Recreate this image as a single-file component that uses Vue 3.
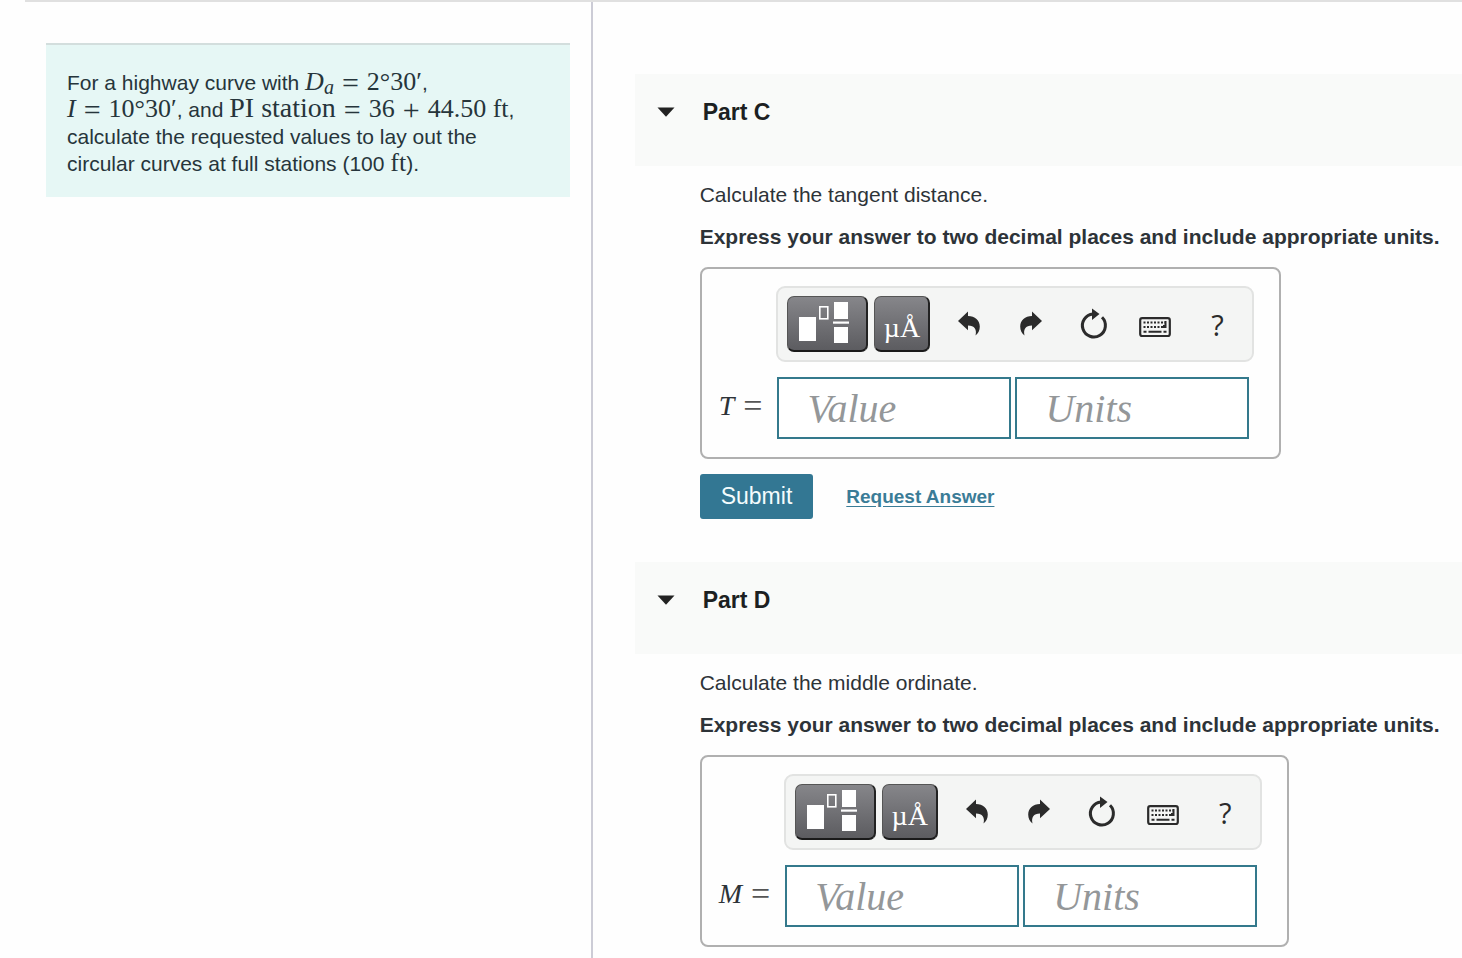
<template>
  <div class="page">
    <aside class="problem-pane">
      <p class="problem">
        For a highway curve with
        <span class="math"><i>D</i><sub>a</sub><span class="op">=</span>2°30′</span>,
        <br />
        <span class="math"><i>I</i><span class="op">=</span>10°30′</span>, and
        <span class="math"><span class="words">PI station</span><span class="op">=</span>36<span class="op">+</span>44.50 ft</span>,
        <br />
        calculate the requested values to lay out the circular curves at full stations (100 <span class="math">ft</span>).
      </p>
    </aside>

    <main class="parts">
      <section v-for="part in parts" :key="part.id" class="part">
        <header class="part__header">
          <button class="part__toggle" type="button" :aria-expanded="part.open" @click="part.open = !part.open">
            <svg class="part__caret" :class="{ 'part__caret--closed': !part.open }" width="18" height="10" viewBox="0 0 18 10">
              <path d="M0.5 0.5h17L9 9.8z" fill="#222" />
            </svg>
            {{ part.title }}
          </button>
        </header>

        <div v-if="part.open" class="part__body">
          <p class="question">{{ part.question }}</p>
          <p class="instruction">Express your answer to two decimal places and include appropriate units.</p>

          <form @submit.prevent>
            <div class="answer">
              <label class="answer__label" :for="`${part.id}-value`"><i>{{ part.symbol }}</i><span class="eq">=</span></label>
              <div class="answer__main">
                <div class="toolbar">
                  <button class="tool-key tool-key--wide" type="button" aria-label="Templates">
                    <svg width="80" height="56" viewBox="0 0 80 56" fill="#fff">
                      <rect x="12" y="21" width="17" height="24" />
                      <rect x="32.8" y="10.8" width="8" height="12" fill="none" stroke="#fff" stroke-width="1.6" />
                      <rect x="47" y="6" width="14" height="17" />
                      <rect x="46" y="25.5" width="16" height="2.2" />
                      <rect x="47" y="31" width="14" height="16" />
                    </svg>
                  </button>
                  <button class="tool-key tool-key--symbols" type="button" aria-label="Symbols">µÅ</button>
                  <div class="toolbar__icons">
                    <button class="tool" type="button" aria-label="Undo">
                      <svg width="24" height="26" viewBox="0 0 24 26">
                        <path d="M1 10L11 0.500v4.500C18 5 22.800 9.500 22.800 15.500c0 4-1.600 7-4.300 9C20 18.500 17.500 14.500 11 14.500v4.700z" fill="#2b2b2b" />
                      </svg>
                    </button>
                    <button class="tool" type="button" aria-label="Redo">
                      <svg width="24" height="26" viewBox="0 0 24 26">
                        <path d="M23 10L13 0.500v4.500C6 5 1.200 9.500 1.200 15.500c0 4 1.600 7 4.300 9C4 18.500 6.500 14.500 13 14.500v4.700z" fill="#2b2b2b" />
                      </svg>
                    </button>
                    <button class="tool" type="button" aria-label="Reset">
                      <svg width="30" height="32" viewBox="0 0 30 32">
                        <path d="M24 9.300A11.500 11.500 0 1 1 15 6" fill="none" stroke="#2b2b2b" stroke-width="3" />
                        <path d="M14 0.500l7.500 5.500-7.500 6z" fill="#2b2b2b" />
                      </svg>
                    </button>
                    <button class="tool" type="button" aria-label="Keyboard">
                      <svg width="32" height="30" viewBox="0 0 32 30">
                        <rect x="1.200" y="9.200" width="29.600" height="17.800" rx="2" fill="none" stroke="#2b2b2b" stroke-width="2.200" />
                        <path d="M4.500 13.500H27M4.500 18H24" stroke="#2b2b2b" stroke-width="2.200" stroke-dasharray="2 1.500" />
                        <path d="M4.500 22.800h3M9.500 22.800h13M24.500 22.800h3" stroke="#2b2b2b" stroke-width="2" />
                        <path d="M27.500 12v7h-3.500v-3h1.500V12z" fill="#2b2b2b" />
                      </svg>
                    </button>
                    <button class="tool tool--help" type="button" aria-label="Help">?</button>
                  </div>
                </div>
                <div class="fields">
                  <input :id="`${part.id}-value`" v-model="part.value" class="field" type="text" placeholder="Value" />
                  <input v-model="part.units" class="field" type="text" placeholder="Units" aria-label="Units" />
                </div>
              </div>
            </div>
            <div class="actions">
              <button class="submit" type="submit">Submit</button>
              <a class="request" href="#">Request Answer</a>
            </div>
          </form>
        </div>
      </section>
    </main>
  </div>
</template>

<script setup>
import { reactive } from 'vue'

const parts = reactive([
  { id: 'c', title: 'Part C', question: 'Calculate the tangent distance.', symbol: 'T', value: '', units: '', open: true },
  { id: 'd', title: 'Part D', question: 'Calculate the middle ordinate.', symbol: 'M', value: '', units: '', open: true },
])
</script>

<style>
body { margin: 0; background: #fefefe; overflow: hidden; }
</style>

<style scoped>
.page {
  display: grid; grid-template-columns: minmax(0, 15fr) minmax(0, 22fr);
  height: 100vh; overflow: hidden; position: relative;
  font-family: "Liberation Sans", Arial, sans-serif; font-size: 21px; color: #2d3338;
}
.page::before { content: ""; position: absolute; top: 0; left: 25px; right: 0; height: 2px; background: #e0e0e0; }
p { margin: 0; }
button { font-family: inherit; cursor: pointer; }

.problem-pane { border-right: 2px solid #ccccd6; padding: 43px 21px 0 46px; }
.problem {
  padding: 24px 21px 20px; border-top: 2px solid #d3dedd;
  background: #e6f7f5; line-height: 27px; color: #26353b;
}
.math { font-family: "Liberation Serif", "Times New Roman", serif; font-size: 26px; line-height: 20px; white-space: nowrap; }
.math sub { font-size: 20px; font-style: italic; line-height: 0; vertical-align: -4px; }
.words { font-size: 28px; line-height: 20px; }
.op { font-size: 30px; line-height: 16px; margin: 0 8px; vertical-align: -3px; }

.parts { padding: 74px 0 0 42px; overflow: hidden; }
.part { margin-bottom: 43px; }
.part__header { height: 92px; background: #f9faf9; }
.part__toggle {
  display: flex; align-items: center; gap: 28px; padding: 0 22px; height: 76px;
  border: none; background: none; font-size: 23px; font-weight: 700; color: #1c1f22;
}
.part__caret--closed { transform: rotate(-90deg); }
.part__body { padding: 14px 0 0 65px; }
.question { line-height: 30px; }
.instruction { margin-top: 12px; line-height: 30px; font-weight: 700; white-space: nowrap; }

.answer {
  display: inline-flex; align-items: flex-end; box-sizing: border-box; margin-top: 15px;
  padding: 17px 25px 18px 17px; border: 2px solid #b0b0b0; border-radius: 8px; vertical-align: top;
}
.answer__label {
  display: flex; align-items: center; height: 62px; padding: 0 14px 4px 0; box-sizing: border-box;
  font-family: "Liberation Serif", serif; font-size: 28px;
}
.eq { margin-left: 9px; font-size: 34px; color: #555; }
.answer__main { display: flex; flex-direction: column; gap: 15px; }
.toolbar {
  display: flex; align-items: center; box-sizing: border-box; height: 76px; padding: 0 4px 0 9px;
  border: 2px solid #e2e3e2; border-radius: 9px; background: #f4f5f4;
}
.tool-key {
  width: 56px; height: 56px; padding: 0; border: 1px solid #555; border-right: 2px solid #222; border-bottom: 2px solid #1a1a1a;
  border-radius: 7px; background: linear-gradient(#86868a, #5c5c60); color: #fff;
  font-family: "Liberation Serif", serif; font-size: 28px; overflow: hidden;
}
.tool-key--wide { display: flex; justify-content: center; align-items: center; width: 81px; margin-right: 6px; }
.tool-key--symbols { padding-top: 8px; }
.tool-key svg { flex: none; }
.toolbar__icons { display: flex; margin-left: 8px; }
.tool {
  display: flex; align-items: center; justify-content: center; width: 62px; height: 56px;
  padding: 0; border: none; background: none; color: #2b2b2b;
}
.tool--help { font-family: "Open Sans", sans-serif; font-size: 29px; }
.fields { display: flex; gap: 4px; margin-left: 1px; }
.field {
  box-sizing: border-box; width: 234px; height: 62px; padding: 0 28px; border: 2px solid #34798c; border-radius: 0;
  background: #fff; font-family: "Liberation Serif", serif; font-size: 40px; font-style: italic; color: #333; outline: none;
}
.field::placeholder { color: #949799; opacity: 1; }

.actions { display: flex; align-items: center; gap: 33px; margin-top: 15px; }
.submit { height: 45px; padding: 0 21px; border: none; border-radius: 3px; background: #337793; color: #f4fcfd; font-size: 23px; }
.request { color: #3a7c97; font-size: 19px; font-weight: 700; text-decoration: underline; text-underline-offset: 3px; }
</style>
